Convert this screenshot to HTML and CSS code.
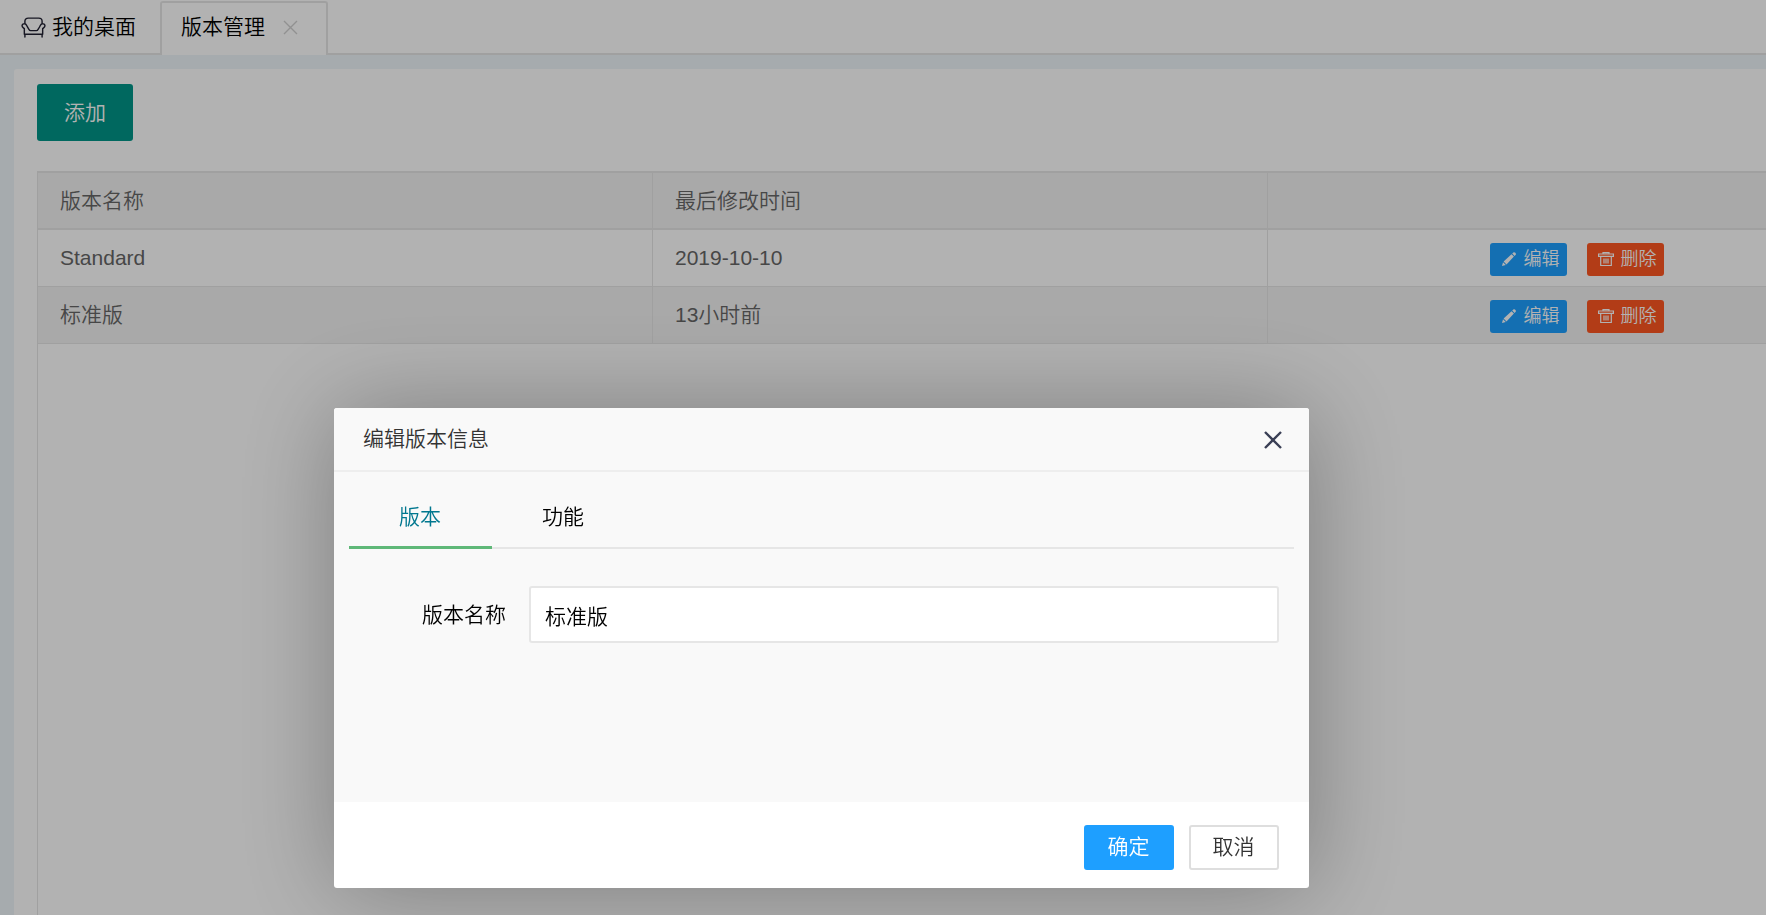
FILE: index.html
```html
<!DOCTYPE html>
<html lang="zh-CN">
<head>
<meta charset="utf-8">
<title>版本管理</title>
<link rel="stylesheet" href="styles.css">
</head>
<body>
<svg class="sprite" aria-hidden="true">
  <symbol id="pencil" viewBox="0 0 16 16">
    <path d="M1 15l1-3.800 2.800 2.800zM2.600 10.500l7.900-7.300 2.400 2.400-7.400 7.800zM11.200 2.500l1.200-1.100c1.200-1 3.300 1 2.300 2.300l-1.100 1.200z" fill="currentColor"/>
  </symbol>
  <symbol id="trash" viewBox="0 0 16 16">
    <path d="M.6 3h14.800v2.400H.6zM5 2.900V1.600h6v1.300M2.700 5.400v9.100h10.600V5.400M6 7.500v5M8 7.500v5M10 7.500v5" fill="none" stroke="currentColor" stroke-width="1.200"/>
  </symbol>
</svg>
<nav class="tabs">
  <a class="tab" href="#home">
    <svg class="sofa" viewBox="0 0 26 22" fill="none" stroke="currentColor" stroke-width="1.500" stroke-linejoin="round" stroke-linecap="round">
      <path d="M4 7V4.500C4 2.300 5.300 1.200 7.500 1.200h11c2.200 0 3.500 1.100 3.500 3.300V7M4 7C2.500 6.800 1 7.700 1 9.200c0 1.500 1.200 2 2.400 3V18h19.200v-5.800c1.200-1 2.400-1.500 2.400-3C25 7.700 23.500 6.800 22 7c-1.500.3-1.800 2-2.500 3.200L17.800 13c-.5 1-1 1.300-1.800 1.300h-6c-.8 0-1.300-.3-1.800-1.300L6.500 10.200C5.800 9 5.500 7.300 4 7M4 18v3M22 18v3"/>
    </svg>
    <span>我的桌面</span>
  </a>
  <div class="tab tab-active">
    <span>版本管理</span>
    <button class="tab-close" type="button" aria-label="关闭标签">
      <svg viewBox="0 0 15 15" stroke="currentColor" stroke-width="1.400"><path d="M1 1l13 13M14 1L1 14"/></svg>
    </button>
  </div>
</nav>
<main class="panel">
  <button class="add" type="button">添加</button>
  <div class="grid">
    <table>
      <thead>
        <tr><th>版本名称</th><th>最后修改时间</th><th></th></tr>
      </thead>
      <tbody>
        <tr>
          <td>Standard</td><td>2019-10-10</td>
          <td><div class="actions">
            <button class="mini edit" type="button"><svg><use href="#pencil"/></svg>编辑</button>
            <button class="mini delete" type="button"><svg><use href="#trash"/></svg>删除</button>
          </div></td>
        </tr>
        <tr>
          <td>标准版</td><td>13小时前</td>
          <td><div class="actions">
            <button class="mini edit" type="button"><svg><use href="#pencil"/></svg>编辑</button>
            <button class="mini delete" type="button"><svg><use href="#trash"/></svg>删除</button>
          </div></td>
        </tr>
      </tbody>
    </table>
  </div>
</main>
<div class="shade">
  <section class="dialog" role="dialog" aria-labelledby="dialog-title">
    <header class="dialog-head">
      <h2 id="dialog-title">编辑版本信息</h2>
      <button class="dialog-close" type="button" aria-label="关闭">
        <svg viewBox="0 0 18 18" stroke="currentColor" stroke-width="2.400"><path d="M1 1l16 16M17 1L1 17"/></svg>
      </button>
    </header>
    <div class="dialog-body">
      <div class="steps" role="tablist">
        <button class="step step-active" type="button" role="tab">版本</button>
        <button class="step" type="button" role="tab">功能</button>
      </div>
      <div class="field">
        <label for="name">版本名称</label>
        <input id="name" type="text" value="标准版">
      </div>
    </div>
    <footer class="dialog-foot">
      <button class="btn btn-primary" type="button">确定</button>
      <button class="btn" type="button">取消</button>
    </footer>
  </section>
</div>
</body>
</html>
```
FILE: styles.css
```css
* { box-sizing: border-box; }
body {
  margin: 0;
  height: 100vh;
  display: flex;
  flex-direction: column;
  overflow: hidden;
  background: #eef5f9;
  color: #000;
  font: 350 21px/32px "Liberation Sans", "Noto Sans CJK SC", sans-serif;
}
button, input { font: inherit; color: inherit; border: 0; padding: 0; margin: 0; }
svg { display: block; }
.sprite { position: absolute; width: 0; height: 0; }

.tabs {
  display: flex;
  height: 55px;
  padding-top: 1px;
  background: #fff;
  box-shadow: inset 0 -2px #e6e6e6;
}
.tab {
  display: flex;
  align-items: center;
  padding: 0 24px 2px 21px;
  color: inherit;
  text-decoration: none;
}
.sofa { width: 25px; height: 21px; margin-right: 6px; color: #223; }
.tab-active {
  padding: 0 28px 4px 19px;
  border: 2px solid #e6e6e6;
  border-bottom: 0;
  border-radius: 3px 3px 0 0;
  background: #fff;
}
.tab-close { margin-left: 18px; background: none; color: #d0d0d0; }
.tab-close svg { width: 15px; height: 15px; }

.panel {
  flex: 1;
  margin: 14px 0 0 14px;
  padding: 15px 0 0 23px;
  display: flex;
  flex-direction: column;
  align-items: flex-start;
  border-radius: 3px 0 0 0;
  background: #fff;
}
.add {
  width: 96px;
  height: 57px;
  flex: none;
  border-radius: 3px;
  background: #009688;
  color: #fff;
}
.grid {
  flex: 1;
  width: 100%;
  margin-top: 30px;
  overflow: hidden;
  border: 2px solid #e6e6e6;
  border-width: 2px 0 0 1px;
}
table {
  width: 1845px;
  table-layout: fixed;
  border-collapse: separate;
  border-spacing: 0;
  color: #666;
}
th, td {
  height: 57px;
  padding: 0 22px;
  border: 1px solid #e6e6e6;
  border-width: 0 1px 1px 0;
  font-weight: inherit;
  text-align: left;
}
th { border-bottom-width: 2px; }
td:last-child { padding: 0 20px 0 24px; }
thead tr, tbody tr:nth-child(even) { background: #f2f2f2; }
.actions { display: flex; justify-content: center; gap: 20px; padding-top: 2px; }
.mini {
  display: flex;
  align-items: center;
  justify-content: center;
  gap: 7px;
  width: 77px;
  height: 33px;
  padding-left: 3px;
  border-radius: 3px;
  color: #fff;
  font-size: 18px;
}
.mini svg { width: 16px; height: 16px; }
.edit { background: #1e9fff; }
.delete { background: #ff5722; }

.shade {
  position: fixed;
  inset: 0;
  padding: 408px 123px 0 0;
  display: flex;
  justify-content: center;
  align-items: flex-start;
  background: rgba(0, 0, 0, .3);
}
.dialog {
  width: 975px;
  border-radius: 3px;
  overflow: hidden;
  background: #fff;
  box-shadow: 2px 2px 100px rgba(0, 0, 0, .3);
}
.dialog-head {
  display: flex;
  align-items: center;
  justify-content: space-between;
  height: 64px;
  padding: 0 27px 0 29px;
  border-bottom: 2px solid #eee;
  background: #f9f9f9;
  color: #333;
}
h2 { margin: 0; font-size: 21px; font-weight: inherit; }
.dialog-close { padding-top: 2px; background: none; color: #3a3f55; }
.dialog-close svg { width: 18px; height: 18px; }
.dialog-body { height: 330px; padding: 15px; background: #f9f9f9; }
.steps { display: flex; box-shadow: inset 0 -2px #e6e6e6; }
.step { width: 143px; height: 62px; padding: 1px 1px 0 0; background: none; border-bottom: 3px solid transparent; }
.step-active { color: #00778f; border-color: #5fb878; }
.field { display: flex; align-items: center; margin-top: 37px; padding-right: 15px; }
.field label { width: 180px; padding-right: 23px; text-align: right; }
.field input {
  flex: 1;
  height: 57px;
  padding: 0 14px;
  border: 2px solid #e6e6e6;
  border-radius: 3px;
  background: #fff;
}
.dialog-foot { display: flex; justify-content: flex-end; gap: 15px; padding: 23px 30px 18px; }
.btn {
  width: 90px;
  height: 45px;
  padding: 0 1px 2px 0;
  border: 2px solid #dedede;
  border-radius: 3px;
  background: #fff;
  color: #333;
}
.btn-primary { border-color: #1e9fff; background: #1e9fff; color: #fff; }
```
